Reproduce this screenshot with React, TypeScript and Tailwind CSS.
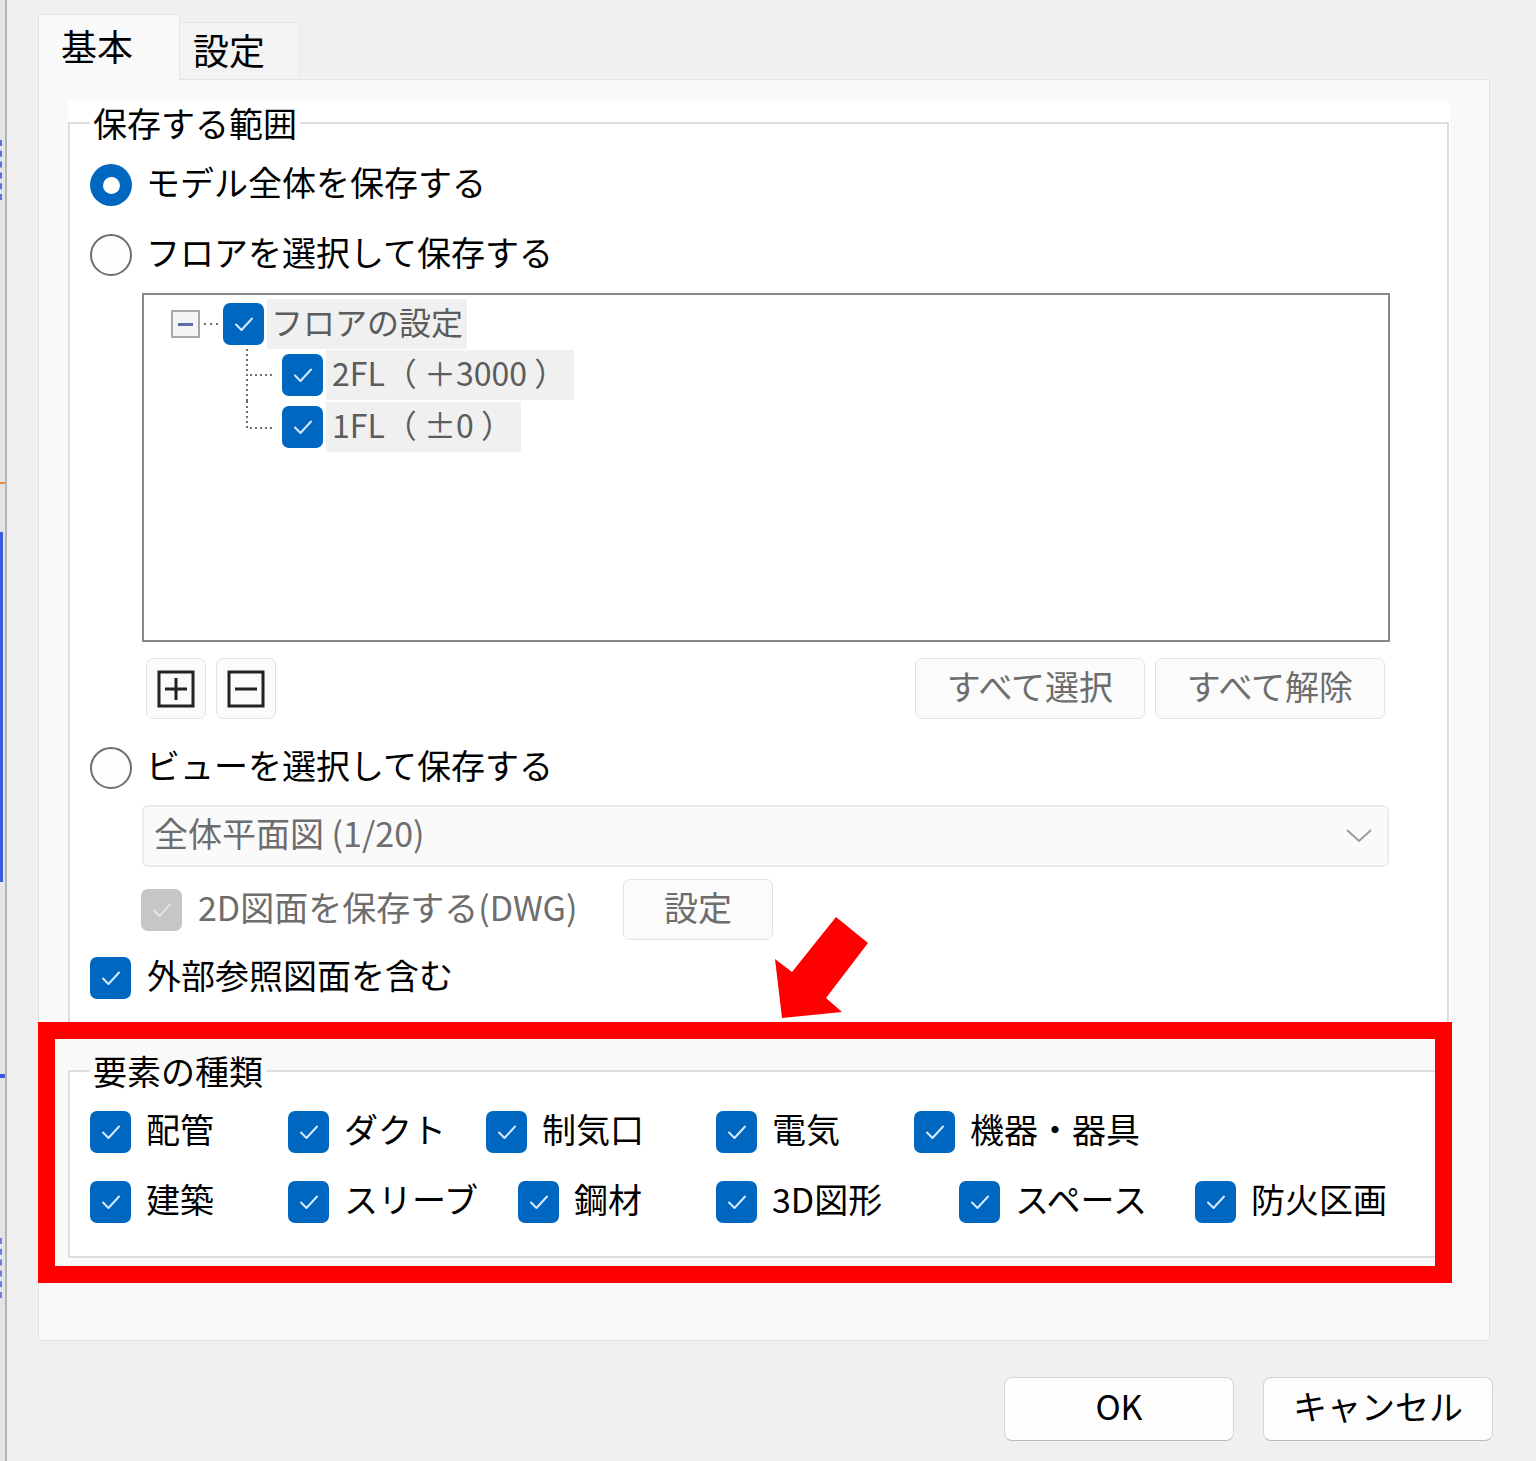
import React from "react";

const Check = ({ color = "#ffffff" }: { color?: string }) => (
  <svg width="22" height="18" viewBox="0 0 22 18" fill="none">
    <path d="M3 9.5 L8.5 15 L19 3.5" stroke={color} strokeWidth="2" strokeLinecap="round" strokeLinejoin="round" />
  </svg>
);

const CheckBox = ({ disabled = false }: { disabled?: boolean }) => (
  <div
    className={`w-[41px] h-[42px] shrink-0 rounded-[7px] flex items-center justify-center ${
      disabled ? "bg-[#c6c6c6]" : "bg-[#0067c0]"
    }`}
  >
    <Check color={disabled ? "#e4e4e4" : "#d8e8ff"} />
  </div>
);

const Radio = ({ selected }: { selected: boolean }) =>
  selected ? (
    <div className="w-[42px] h-[42px] shrink-0 rounded-full bg-[#0067c0] flex items-center justify-center">
      <div className="w-[17px] h-[17px] rounded-full bg-white" />
    </div>
  ) : (
    <div className="w-[42px] h-[42px] shrink-0 rounded-full border-[2.5px] border-[#6e6e6e] bg-[#fdfdfd]" />
  );

// text nudged up a little so the glyphs sit on the same centre as in the dialog
const Label = ({ children, className = "" }: { children: React.ReactNode; className?: string }) => (
  <span className={`pb-[6px] ${className}`}>{children}</span>
);

const DialogButton = ({
  children,
  className = "",
  muted = false,
}: {
  children: React.ReactNode;
  className?: string;
  muted?: boolean;
}) => (
  <button
    className={`flex items-center justify-center rounded-[7px] border border-[#e3e3e3] bg-[#fbfbfb] ${
      muted ? "text-[#6d6d6d]" : "text-black"
    } ${className}`}
  >
    {children}
  </button>
);

// tree connector: vertical line + branch to the right
const Branch = ({ last }: { last: boolean }) => (
  <svg width="36" height="52" viewBox="0 0 36 52" className="shrink-0">
    <line x1="1" y1="0" x2="1" y2={last ? 27 : 52} stroke="#6f6f6f" strokeWidth="2" strokeDasharray="2 3" />
    <line x1="4" y1={last ? 27 : 26} x2="29" y2={last ? 27 : 26} stroke="#6f6f6f" strokeWidth="2" strokeDasharray="2 3" />
  </svg>
);

const elementRows: { label: string; w: string }[][] = [
  [
    { label: "配管", w: "w-[198px]" },
    { label: "ダクト", w: "w-[198px]" },
    { label: "制気口", w: "w-[230px]" },
    { label: "電気", w: "w-[198px]" },
    { label: "機器・器具", w: "w-auto" },
  ],
  [
    { label: "建築", w: "w-[198px]" },
    { label: "スリーブ", w: "w-[230px]" },
    { label: "鋼材", w: "w-[198px]" },
    { label: "3D図形", w: "w-[243px]" },
    { label: "スペース", w: "w-[236px]" },
    { label: "防火区画", w: "w-auto" },
  ],
];

export default function App() {
  return (
    <div className="relative w-[1536px] h-[1461px] overflow-hidden bg-[#f0f0f0] flex font-['Noto_Sans_CJK_JP','Noto_Sans',sans-serif] text-[34px] leading-none text-black">
      {/* left window edge */}
      <div className="w-[7px] h-full shrink-0 bg-[#e4e4e4] border-r-2 border-[#b4b4b4] flex flex-col">
        <div className="mt-[140px] h-[60px] w-[3px] border-l-2 border-dashed border-[#5a6fe0]" />
        <div className="mt-[282px] h-[2px] w-[5px] bg-[#e08a3a]" />
        <div className="mt-[48px] h-[350px] w-[3px] bg-[#3b5be0]" />
        <div className="mt-[192px] h-[4px] w-[5px] bg-[#3b5be0]" />
        <div className="mt-[160px] h-[60px] w-[3px] border-l-2 border-dashed border-[#6a7fe8]" />
      </div>

      <div className="pl-[31px] pt-[14px] flex flex-col">
        {/* tabs */}
        <div className="flex items-end h-[65px]">
          <div className="relative z-10 -mb-px w-[142px] h-[66px] pl-[22px] pb-[6px] flex items-center bg-[#f9f9f9] border border-b-0 border-[#e3e3e3] rounded-t-[4px] text-[36px]">
            基本
          </div>
          <div className="w-[120px] h-[57px] pl-[13px] pb-[4px] flex items-center bg-[#f3f3f3] border border-b-0 border-l-0 border-[#e6e6e6] rounded-tr-[4px] text-[36px]">
            設定
          </div>
        </div>

        {/* tab panel */}
        <div className="w-[1452px] h-[1262px] bg-[#f9f9f9] border border-[#e3e3e3] pt-[21px]">
          {/* 保存する範囲 */}
          <div className="ml-[29px] w-[1382px] bg-white">
            <fieldset className="border-2 border-[#dedede] w-[1381px] px-[20px] pb-[19px]">
              <legend className="px-[3px] leading-[44px]">保存する範囲</legend>
              <div className="pt-[5px]">
                <div className="h-[70px] flex items-center gap-[14px]">
                  <Radio selected />
                  <Label>モデル全体を保存する</Label>
                </div>
                <div className="h-[70px] flex items-center gap-[14px]">
                  <Radio selected={false} />
                  <Label>フロアを選択して保存する</Label>
                </div>

                {/* floor tree */}
                <div className="mt-[3px] ml-[52px] w-[1248px] h-[349px] border-2 border-[#848990] bg-white pt-[4px] text-[32px] text-[#5c5c5c]">
                  <div className="h-[50px] flex items-center pl-[27px]">
                    <div className="w-[29px] h-[28px] border-2 border-[#a9a9a9] bg-[#f4f4f4] flex items-center justify-center">
                      <div className="w-[15px] h-[3px] bg-[#5b6fa8]" />
                    </div>
                    <svg width="23" height="4" viewBox="0 0 23 4" className="shrink-0">
                      <line x1="4" y1="2" x2="20" y2="2" stroke="#6f6f6f" strokeWidth="2" strokeDasharray="2 4" />
                    </svg>
                    <CheckBox />
                    <div className="ml-[3px] h-[50px] px-[4px] pb-[6px] flex items-center bg-[#f0f0f0]">フロアの設定</div>
                  </div>
                  <div className="ml-[102px]">
                    <div className="h-[52px] flex items-center">
                      <Branch last={false} />
                      <CheckBox />
                      <div className="ml-[3px] h-[50px] pl-[6px] pr-[8px] pb-[6px] flex items-center bg-[#f0f0f0] whitespace-pre">
                        2FL（ ＋3000 ）
                      </div>
                    </div>
                    <div className="h-[52px] flex items-center">
                      <Branch last />
                      <CheckBox />
                      <div className="ml-[3px] h-[50px] pl-[6px] pr-[8px] pb-[6px] flex items-center bg-[#f0f0f0] whitespace-pre">
                        1FL（ ±0 ）
                      </div>
                    </div>
                  </div>
                </div>

                {/* tree buttons */}
                <div className="mt-[16px] ml-[56px] w-[1239px] h-[61px] flex justify-between">
                  <div className="flex gap-[10px]">
                    <DialogButton className="w-[60px] h-[61px]">
                      <svg width="38" height="38" viewBox="0 0 38 38" fill="none">
                        <rect x="2" y="2" width="34" height="34" stroke="#222" strokeWidth="3" />
                        <path d="M19 8 V30 M8 19 H30" stroke="#222" strokeWidth="3" />
                      </svg>
                    </DialogButton>
                    <DialogButton className="w-[60px] h-[61px]">
                      <svg width="38" height="38" viewBox="0 0 38 38" fill="none">
                        <rect x="2" y="2" width="34" height="34" stroke="#222" strokeWidth="3" />
                        <path d="M8 19 H30" stroke="#222" strokeWidth="3" />
                      </svg>
                    </DialogButton>
                  </div>
                  <div className="flex gap-[10px]">
                    <DialogButton muted className="w-[230px] h-[61px] pb-[6px]">
                      すべて選択
                    </DialogButton>
                    <DialogButton muted className="w-[230px] h-[61px] pb-[6px]">
                      すべて解除
                    </DialogButton>
                  </div>
                </div>

                <div className="mt-[14px] h-[70px] flex items-center gap-[14px]">
                  <Radio selected={false} />
                  <Label>ビューを選択して保存する</Label>
                </div>

                {/* view dropdown (disabled) */}
                <div className="mt-[2px] ml-[52px] w-[1247px] h-[62px] rounded-[6px] border-2 border-[#ececec] bg-[#fafafa] flex items-center justify-between pl-[10px] pr-[14px] text-[#6d6d6d]">
                  <Label>全体平面図 (1/20)</Label>
                  <svg width="28" height="16" viewBox="0 0 28 16" fill="none">
                    <path d="M2 2 L14 13 L26 2" stroke="#9a9a9a" strokeWidth="2" />
                  </svg>
                </div>

                <div className="mt-[12px] ml-[51px] h-[61px] flex items-center">
                  <CheckBox disabled />
                  <Label className="ml-[16px] w-[425px] text-[#6d6d6d]">2D図面を保存する(DWG)</Label>
                  <DialogButton muted className="w-[150px] h-[61px] pb-[6px]">
                    設定
                  </DialogButton>
                </div>

                <div className="mt-[3px] h-[70px] flex items-center gap-[16px]">
                  <CheckBox />
                  <Label>外部参照図面を含む</Label>
                </div>
              </div>
            </fieldset>
          </div>

          {/* 要素の種類 */}
          <fieldset className="mt-[15px] ml-[29px] w-[1381px] border-2 border-[#dedede] bg-white pl-[20px] pb-[19px]">
            <legend className="px-[3px] leading-[44px]">要素の種類</legend>
            <div className="pt-[4px]">
              {elementRows.map((row, i) => (
                <div key={i} className="h-[70px] flex items-center">
                  {row.map((item) => (
                    <div key={item.label} className={`${item.w} flex items-center gap-[15px]`}>
                      <CheckBox />
                      <Label>{item.label}</Label>
                    </div>
                  ))}
                </div>
              ))}
            </div>
          </fieldset>
        </div>

        {/* dialog buttons */}
        <div className="mt-[36px] w-[1455px] flex justify-end gap-[29px]">
          <button className="w-[230px] h-[64px] pb-[6px] rounded-[8px] border border-[#d4d4d4] border-b-[#b9b9b9] bg-[#fdfdfd] flex items-center justify-center">
            OK
          </button>
          <button className="w-[230px] h-[64px] pb-[6px] rounded-[8px] border border-[#d4d4d4] border-b-[#b9b9b9] bg-[#fdfdfd] flex items-center justify-center">
            キャンセル
          </button>
        </div>
      </div>

      {/* annotation: red frame and arrow */}
      <div className="absolute left-[38px] top-[1022px] w-[1414px] h-[261px] border-[17px] border-[#ff0000]" />
      <svg className="absolute left-[770px] top-[912px]" width="104" height="112" viewBox="0 0 104 112">
        <polygon points="12,106 5,47 22,60 66,5 98,31 56,86 72,100" fill="#ff0000" />
      </svg>
    </div>
  );
}
